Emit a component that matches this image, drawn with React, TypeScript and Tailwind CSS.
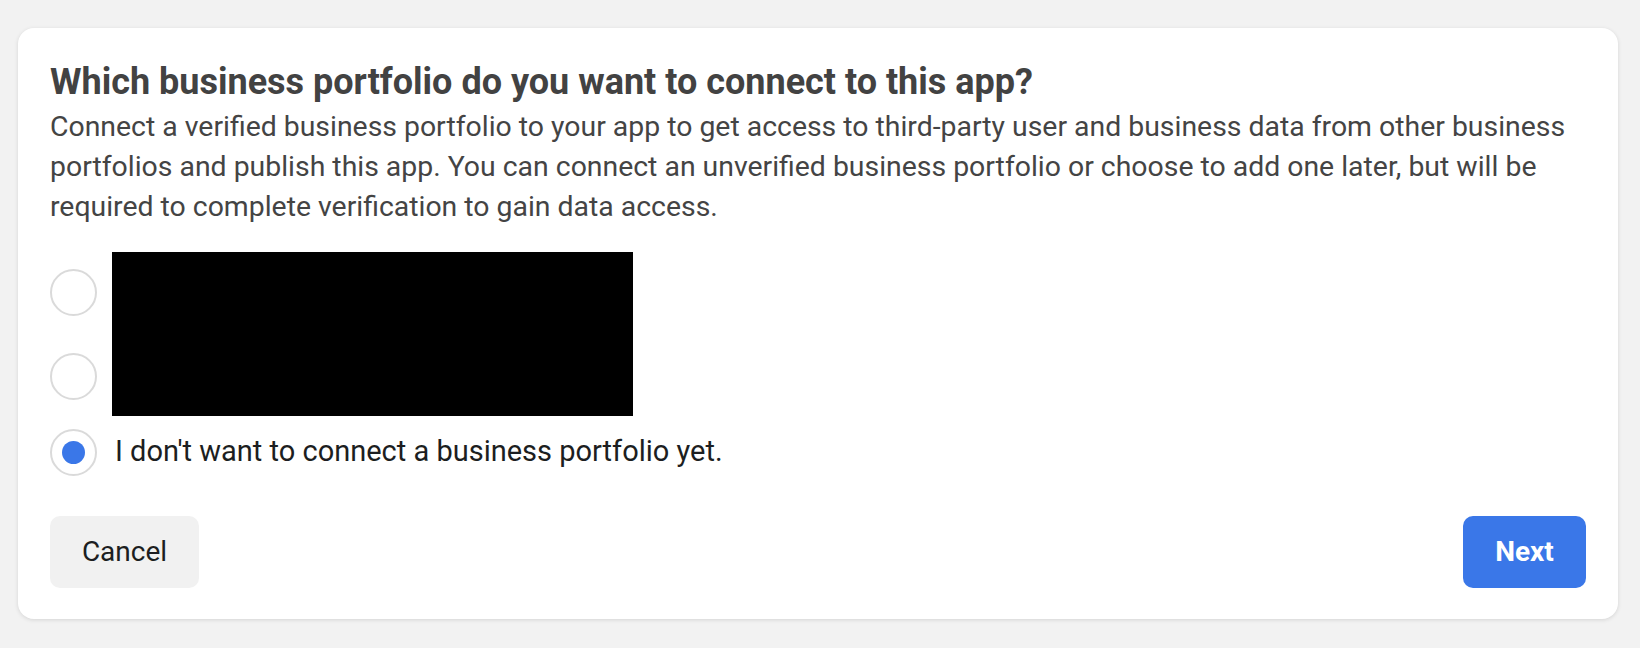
import React, { useState } from "react";

const font = { fontFamily: "Roboto, 'Noto Sans', Arial, sans-serif" };

interface RadioProps {
  checked: boolean;
  onSelect: () => void;
}

function Radio({ checked, onSelect }: RadioProps) {
  return (
    <button
      type="button"
      onClick={onSelect}
      className="flex h-[47px] w-[47px] shrink-0 items-center justify-center rounded-full border-2 border-[#dadada] bg-white"
    >
      {checked && <span className="h-[23px] w-[23px] rounded-full bg-[#3a77e8]" />}
    </button>
  );
}

export default function App() {
  const [selected, setSelected] = useState(2);

  return (
    <div className="min-h-screen bg-[#f2f2f2] pt-[28px] pl-[18px]" style={font}>
      <div className="w-[1600px] rounded-[16px] bg-white px-[32px] pt-[32px] pb-[31px] shadow-[0_1px_4px_rgba(0,0,0,0.12)]">
        <h1 className="text-[36px] font-bold leading-[44px] text-[#424242]">
          Which business portfolio do you want to connect to this app?
        </h1>
        <p className="mt-[3px] text-[28.4px] leading-[40px] text-[#444444]">
          Connect a verified business portfolio to your app to get access to third-party user and business data from other
          business portfolios and publish this app. You can connect an unverified business portfolio or choose to add one
          later, but will be required to complete verification to gain data access.
        </p>

        <div className="relative mt-[25px] flex flex-col">
          {/* redacted business names */}
          <div className="absolute left-[62px] top-0 h-[164px] w-[521px] bg-black" />
          <div className="flex h-[80px] items-center">
            <Radio checked={selected === 0} onSelect={() => setSelected(0)} />
          </div>
          <div className="mt-[4px] flex h-[80px] items-center">
            <Radio checked={selected === 1} onSelect={() => setSelected(1)} />
          </div>
          <div className="mt-[8px] flex h-[56px] items-center gap-[18px]">
            <Radio checked={selected === 2} onSelect={() => setSelected(2)} />
            <span className="text-[29px] text-[#1c1e21]">I don't want to connect a business portfolio yet.</span>
          </div>
        </div>

        <div className="mt-[36px] flex items-center justify-between">
          <button
            type="button"
            className="h-[72px] w-[149px] rounded-[10px] bg-[#f1f1f1] text-[28px] text-[#1c1e21]"
          >
            Cancel
          </button>
          <button
            type="button"
            className="h-[72px] w-[123px] rounded-[10px] bg-[#3a77e8] text-[28px] font-bold text-white"
          >
            Next
          </button>
        </div>
      </div>
    </div>
  );
}
